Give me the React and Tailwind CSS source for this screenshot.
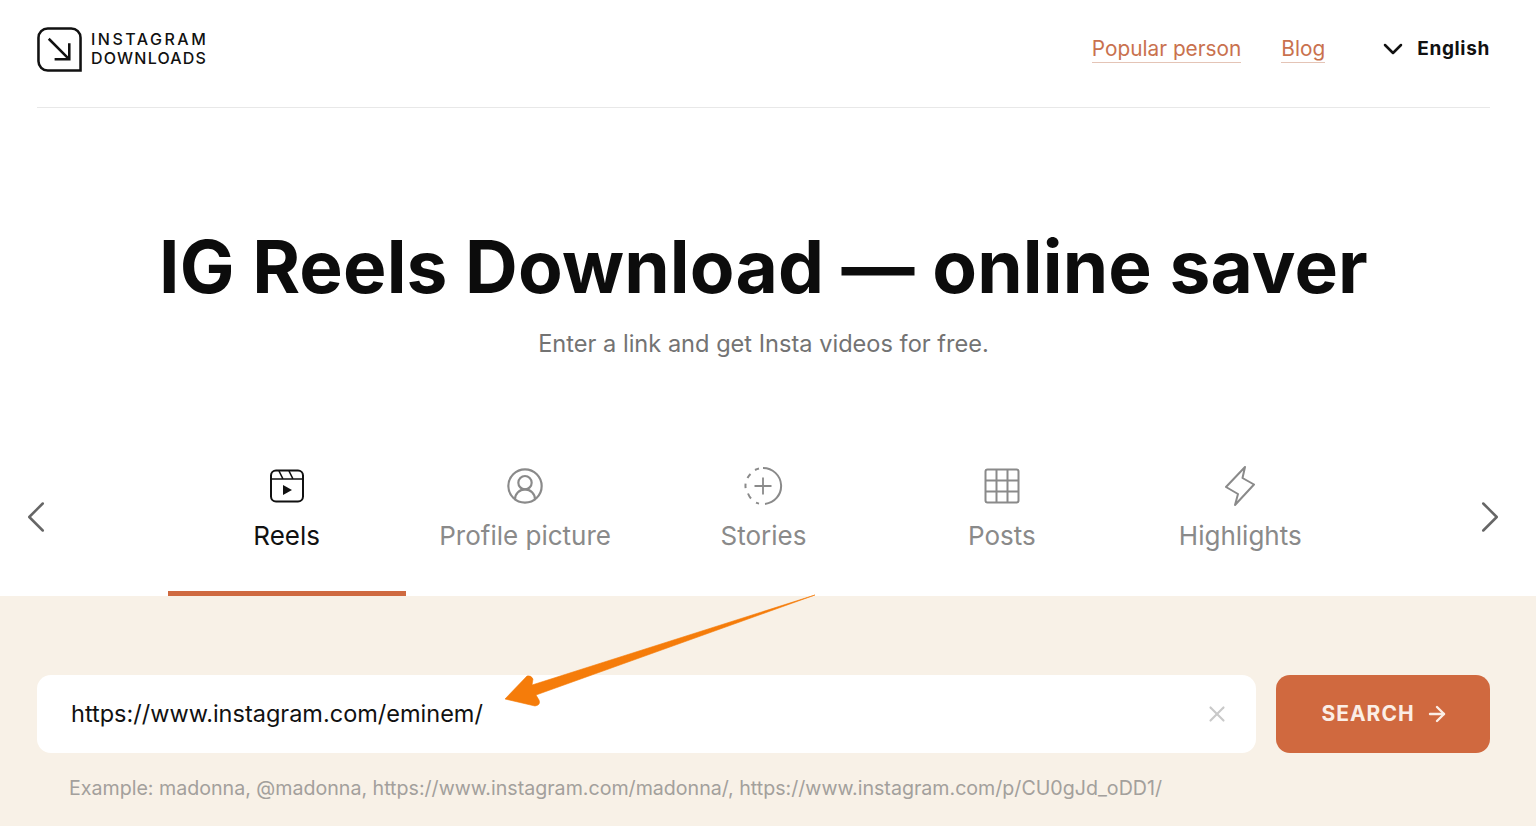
import { ChevronDown, ChevronLeft, ChevronRight, ArrowRight, X, CircleUserRound } from 'lucide-react'

function Logo() {
  return (
    <svg width="45" height="45" viewBox="0 0 46 46" fill="none" stroke="#111" strokeWidth="2.6">
      <path d="M11 1.5h24a9.5 9.5 0 0 1 9.5 9.5v33.5H11A9.5 9.5 0 0 1 1.5 35V11A9.5 9.5 0 0 1 11 1.5Z" />
      <path d="M12 12l21 21M33 16.500V33H18" />
    </svg>
  )
}

function ReelsIcon() {
  return (
    <svg width="36" height="36" viewBox="0 0 36 36" fill="none" stroke="currentColor" strokeWidth="2">
      <rect x="2" y="2.500" width="32" height="31" rx="5" />
      <path d="M2 11h32M10 3l4 8M20 3l4 8" strokeWidth="1.6" />
      <path d="M14 17l9 5-9 5Z" fill="currentColor" stroke="none" />
    </svg>
  )
}

function StoriesIcon() {
  return (
    <svg width="40" height="40" viewBox="0 0 40 40" fill="none" stroke="currentColor" strokeWidth="2">
      <path d="M20 2a18 18 0 0 1 2 35.9M16 37.6a18 18 0 0 1-3-1M8 32.500a18 18 0 0 1-3-5M2.600 22a18 18 0 0 1 0-4.500M4.500 12a18 18 0 0 1 3-4M12 4a18 18 0 0 1 4-1.500" />
      <path d="M20 11.500v17M11.500 20h17" strokeWidth="1.800" />
    </svg>
  )
}

function PostsIcon() {
  return (
    <svg width="36" height="36" viewBox="0 0 36 36" fill="none" stroke="currentColor" strokeWidth="2">
      <rect x="1.500" y="1.500" width="33" height="33" rx="2" />
      <path d="M12.500 1.500v33M23.500 1.500v33M1.500 12.500h33M1.500 23.500h33" />
    </svg>
  )
}

function HighlightsIcon() {
  return (
    <svg width="40" height="40" viewBox="0 0 40 40" fill="none" stroke="currentColor" strokeWidth="2" strokeLinejoin="round">
      <path d="M25 1L6 21l12 7-3 11 19-20.500-11.500-6.500Z" />
    </svg>
  )
}

function Tab({ icon, label, active }) {
  return (
    <div className={`flex w-[238.4px] flex-col items-center border-b-[5px] ${active ? 'border-[#cf6a40] text-[#111]' : 'border-transparent text-[#8a8a8a]'}`}>
      <div className="flex h-10 items-center justify-center">{icon}</div>
      <span className="mt-[13px] mb-[38px] text-[26px] leading-[34px]">{label}</span>
    </div>
  )
}

export default function App() {
  return (
    <div className="relative h-[826px] w-[1536px] overflow-hidden bg-white font-['Inter',sans-serif]">
      <div className="ml-[37px] w-[1453px]">
        <header className="flex h-[108px] items-center justify-between border-b border-[#e8e8e8] pb-[9px]">
          <div className="flex items-center gap-[9px]">
            <Logo />
            <div className="text-[16px] leading-[19.5px] font-medium text-[#111]">
              <div className="tracking-[0.155em]">INSTAGRAM</div>
              <div className="tracking-[0.075em]">DOWNLOADS</div>
            </div>
          </div>
          <nav className="flex items-center">
            <a className="border-b border-[#e4c4b6] text-[20.8px] leading-[27px] text-[#c9714e]">Popular person</a>
            <a className="ml-10 border-b border-[#e4c4b6] text-[20.8px] leading-[27px] text-[#c9714e]">Blog</a>
            <ChevronDown className="ml-[52px] text-[#111]" size={32} strokeWidth={1.9} />
            <span className="ml-[8px] text-[19px] font-bold tracking-[0.035em] text-[#111]">English</span>
          </nav>
        </header>

        <h1 className="mt-[113px] text-center text-[73px] leading-[92px] font-bold tracking-[0.17px] text-[#0c0c0c]">
          IG Reels Download — online saver
        </h1>
        <p className="mt-[15px] text-center text-[23.6px] leading-[32px] text-[#737373]">Enter a link and get Insta videos for free.</p>
      </div>

      <div className="mt-[106px] flex items-center justify-between pr-[19px] pl-[9px]">
        <ChevronLeft size={54} strokeWidth={1.1} className="mb-[28px] text-[#666]" />
        <div className="ml-[1px] flex">
          <Tab active label="Reels" icon={<ReelsIcon />} />
          <Tab label="Profile picture" icon={<CircleUserRound size={40} strokeWidth={1.3} />} />
          <Tab label="Stories" icon={<StoriesIcon />} />
          <Tab label="Posts" icon={<PostsIcon />} />
          <Tab label="Highlights" icon={<HighlightsIcon />} />
        </div>
        <ChevronRight size={54} strokeWidth={1.1} className="mb-[28px] text-[#666]" />
      </div>

      <section className="h-[230px] bg-[#f8f1e7] pt-[79px] pl-[37px]">
        <div className="flex w-[1453px] gap-5">
          <div className="flex h-[78px] flex-1 items-center justify-between rounded-[14px] bg-white pr-[26px] pl-[34px]">
            <span className="text-[23.5px] text-[#111]">https://www.instagram.com/eminem/</span>
            <X size={26} className="text-[#c9c9c9]" />
          </div>
          <button className="flex h-[78px] w-[214px] items-center justify-center gap-[10px] rounded-[14px] bg-[#d0693f] pl-[4px] text-[21px] font-bold tracking-[0.048em] text-[#fbeee6]">
            SEARCH
            <ArrowRight size={24} strokeWidth={2.4} />
          </button>
        </div>
        <p className="mt-[21px] pl-[32px] text-[19.63px] leading-[28px] text-[#a3a09c]">
          Example: madonna, @madonna, https://www.instagram.com/madonna/, https://www.instagram.com/p/CU0gJd_oDD1/
        </p>
      </section>

      <svg className="absolute top-0 left-0" width="1536" height="826" fill="none">
        <path
          d="M815 595L532 685L533 679Q531 675 527 676L505 699L535 706Q541 705 539 700L536 695Z"
          fill="#f57c0a"
          stroke="#f57c0a"
          strokeWidth="0.6"
          strokeLinejoin="round"
        />
      </svg>
    </div>
  )
}
